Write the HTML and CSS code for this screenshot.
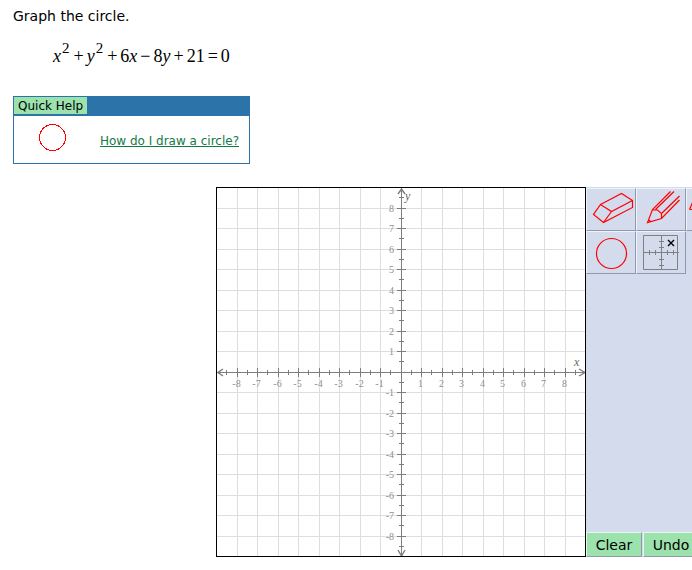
FILE: index.html
```html
<!DOCTYPE html>
<html lang="en">
<head>
    <meta charset="UTF-8">
    <meta name="viewport" content="width=device-width, initial-scale=1.0">
    <title>Graph the circle</title>
    <link rel="stylesheet" href="styles.css">
</head>
<body>
    <div class="question">
        <p class="prompt">Graph the circle.</p>
        <p class="equation"><i>x</i><sup>2</sup><span class="op">+</span><i>y</i><sup>2</sup><span class="op">+</span>6<i>x</i><span class="op">−</span>8<i>y</i><span class="op">+</span>21<span class="op">=</span>0</p>
    </div>

    <!-- quick help -->
    <div class="help">
        <div class="help-header"><span class="help-title">Quick Help</span></div>
        <div class="help-body">
            <svg class="help-icon" width="28" height="28" viewBox="0 0 28 28" shape-rendering="crispEdges"><circle cx="13.5" cy="13.5" r="13"/></svg>
            <a href="#">How do I draw a circle?</a>
        </div>
    </div>

    <!-- graph and its tools -->
    <div class="grapher">
        <svg class="graph" id="graph" width="368" height="368" viewBox="0 0 368 368"></svg>
        <div class="side">
            <div class="tools">
                <button class="tool" type="button" aria-label="Eraser">
                    <svg width="48" height="42" viewBox="0 0 48 42">
                        <path d="M13.5 15.5 L34.5 4.5 L45.5 11.5 V18.5 L16.5 33.5 L6.5 25.5 L13.5 15.5 L24.5 22.5 L45.5 11.5 M24.5 22.5 L16.5 33.5"/>
                    </svg>
                </button>
                <button class="tool" type="button" aria-label="Pencil">
                    <svg width="48" height="42" viewBox="0 0 48 42">
                        <path d="M33.5 2.5 L15.5 20.5 L10.5 33.5 L24.5 29.5 L42.5 11 M15.5 21 L20.5 21 L24.5 24.5 V29.5 M18.5 20.5 L37 2.5 M24.5 24.5 L42.5 7 M11.5 31 L14 32.5 L10.5 33.5"/>
                    </svg>
                </button>
                <button class="tool" type="button" aria-label="Line">
                    <svg width="48" height="42" viewBox="0 0 48 42">
                        <path d="M2.5 20.5 L5.5 13.5 L34.5 5.5 M2.5 20.5 H5.5"/>
                    </svg>
                </button>
                <button class="tool" type="button" aria-label="Circle">
                    <svg width="48" height="42" viewBox="0 0 48 42">
                        <circle cx="24.5" cy="21.5" r="15"/>
                    </svg>
                </button>
                <button class="tool" type="button" aria-label="Point">
                    <svg width="48" height="42" viewBox="0 0 48 42">
                        <path class="gray" d="M6.5 3.5 H40.5 V37.5 H6.5 Z M24.5 3.5 V37.5 M6.5 20.5 H42 M12.5 18 V23 M18.5 18 V23 M30.5 18 V23 M36.5 18 V23 M22 9.5 H27 M22 15.5 H27 M22 27.5 H27 M22 33.5 H27"/>
                        <path class="mark" d="M31 8 L37 14 M37 8 L31 14"/>
                    </svg>
                </button>
            </div>
            <div class="actions">
                <button type="button">Clear</button>
                <button type="button">Undo</button>
            </div>
        </div>
    </div>

    <script src="graph.js"></script>
</body>
</html>
```
FILE: styles.css
```css
*{
    margin: 0;
    padding: 0;
    box-sizing: border-box;
}

body{
    font-family: Verdana, "DejaVu Sans", sans-serif;
    font-size: 13px;
    color: #000;
    background-color: #fff;
}

.question{
    padding: 8px 13px 0;
}
.prompt{
    font-size: 14px;
    line-height: 16px;
}
.equation{
    margin: 20px 0 0 40px;
    font-family: "Liberation Serif", serif;
    font-size: 18px;
    line-height: 24px;
}
.equation sup{
    margin: 0 1px;
    font-size: 15px;
    line-height: 0;
    vertical-align: 9px;
}
.op{
    margin: 0 3px;
}

/* quick help */
.help{
    width: 237px;
    margin: 28px 0 0 13px;
    border: 1px solid #2b73a8;
    font-size: 12px;
}
.help-header{
    display: flex;
    padding-bottom: 2px;
    background-color: #2b73a8;
}
.help-title{
    padding: 2px 4px 0;
    line-height: 15px;
    background-color: #9be2ad;
}
.help-body{
    display: flex;
    align-items: flex-start;
    justify-content: space-between;
    padding: 8px 10px 11px 25px;
}
.help-icon{
    fill: none;
    stroke: #f00;
}
.help-body a{
    padding-top: 7px;
    line-height: 20px;
    color: #147a45;
}

/* graph */
.grapher{
    display: flex;
    margin: 23px 0 0 216px;
    overflow: hidden;
}
.graph{
    flex: none;
    box-sizing: content-box;
    border: 1px solid #000;
}
.grid{
    stroke: #dedede;
}
.axis{
    fill: none;
    stroke: #7d7d7d;
}
.arrow{
    fill: none;
    stroke: #7d7d7d;
    stroke-width: 1.4;
}
.number,
.name{
    font-family: "Liberation Serif", serif;
    font-size: 10px;
    fill: #909090;
}
.name{
    font-size: 12px;
    font-style: italic;
    fill: #666;
}

/* tools beside the graph */
.side{
    flex: 1;
    min-width: 0;
    display: flex;
    flex-direction: column;
    justify-content: space-between;
    padding-top: 1px;
    overflow: hidden;
    background-color: #d3dbed;
}
.tools{
    display: grid;
    grid-template-columns: repeat(3, 50px);
}
.tool{
    height: 43px;
    border: 1px solid #8f99ad;
    border-top-color: #f0f3fa;
    border-left-color: #f0f3fa;
    background-color: #d3dbed;
}
.tool svg{
    display: block;
    fill: none;
    stroke: #f00;
    stroke-width: 1.2;
}
.tool .gray{
    stroke: #808080;
    stroke-width: 1;
}
.tool .mark{
    stroke: #000;
    stroke-width: 1.4;
}
.actions{
    display: flex;
    gap: 1px;
}
.actions button{
    flex: none;
    width: 56px;
    height: 25px;
    padding-top: 1px;
    border: 1px solid #8f99ad;
    border-top-color: #e8f7ec;
    border-left-color: #e8f7ec;
    background-color: #9be2ad;
    font-family: inherit;
    font-size: 14px;
    line-height: 22px;
}
```
FILE: graph.js
```js
var graph = document.getElementById('graph');
var size = 368;
var center = 184;
var unit = 20.5;

function add(name, className, attrs, text) {
    var el = document.createElementNS('http://www.w3.org/2000/svg', name);
    el.setAttribute('class', className);
    for (var key in attrs) {
        el.setAttribute(key, attrs[key]);
    }
    if (text) {
        el.textContent = text;
    }
    graph.appendChild(el);
}

// middle of the pixel that a coordinate falls in
function at(n) {
    return Math.floor(center + n * unit) + 0.5;
}

var grid = '';
var axis = 'M0 184.5 H' + size + ' M184.5 0 V' + size;
for (var n = -8.5; n <= 8.5; n += 0.5) {
    var p = at(n);
    var whole = n % 1 === 0;
    var len = whole ? 4.5 : 2.5;
    if (n === 0) {
        continue;
    }
    if (whole) {
        grid += 'M' + p + ' 0 V' + size + ' M0 ' + p + ' H' + size + ' ';
    }
    axis += ' M' + p + ' ' + (184.5 - len) + ' V' + (184.5 + len);
    axis += ' M' + (184.5 - len) + ' ' + p + ' H' + (184.5 + len);
}
add('path', 'grid', { d: grid });
add('path', 'axis', { d: axis });
add('path', 'arrow', { d: 'M6 181 L1 184.5 L6 188 M362 181 L368 184.5 L362 188 M181 6 L184.5 1 L188 6 M181 362 L184.5 368 L188 362' });

for (var i = -8; i <= 8; i++) {
    if (i !== 0) {
        add('text', 'number', { x: at(i) - 1, y: 199, 'text-anchor': 'middle' }, String(i));
        add('text', 'number', { x: 177, y: at(-i) + 3, 'text-anchor': 'end' }, String(i));
    }
}
add('text', 'name', { x: 357, y: 178 }, 'x');
add('text', 'name', { x: 188, y: 12 }, 'y');
```
